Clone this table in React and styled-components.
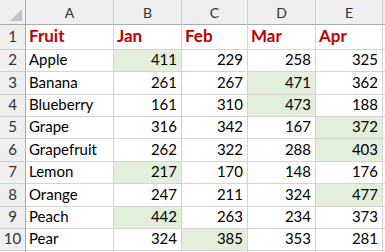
import React from "react";
import styled, { createGlobalStyle } from "styled-components";

const Global = createGlobalStyle`
  html, body { margin: 0; padding: 0; background: #fff; }
  body { font-family: Lato, "Liberation Sans", sans-serif; }
`;

const Sheet = styled.div`
  display: grid;
  grid-template-columns: 26px 88px 68px 66px 68px 67px 2px;
  grid-template-rows: ${(p) => p.$rows};
  width: 385px;
  height: 252px;
  overflow: hidden;
`;

const Corner = styled.div`
  background: #efefef;
  border-right: 1px solid #ababab;
  border-bottom: 1px solid #ababab;
  position: relative;
  &::after {
    content: "";
    position: absolute;
    right: 3px;
    bottom: 3px;
    width: 0;
    height: 0;
    border-left: 12px solid transparent;
    border-bottom: 12px solid #c4c4c4;
  }
`;

const ColHead = styled.div`
  background: #efefef;
  border-right: 1px solid #cfcfcf;
  border-bottom: 1px solid #ababab;
  display: flex;
  align-items: center;
  justify-content: center;
  font-size: 14px;
  color: #333;
  padding-top: 1px;
`;

const RowHead = styled.div`
  background: #efefef;
  border-right: 1px solid #ababab;
  border-bottom: 1px solid #cfcfcf;
  display: flex;
  align-items: flex-end;
  justify-content: center;
  font-size: 15px;
  color: #333;
  padding-bottom: ${(p) => (p.$big ? "4px" : "3px")};
  box-sizing: border-box;
`;

const Cell = styled.div`
  border-right: 1px solid #d4d4d4;
  border-bottom: 1px solid #d4d4d4;
  background: ${(p) => (p.$hi ? "#e2efda" : "#fff")};
  display: flex;
  align-items: flex-end;
  justify-content: ${(p) => (p.$num ? "flex-end" : "flex-start")};
  padding: 0 4px 3px 3px;
  box-sizing: border-box;
  font-size: 15px;
  color: #000;
  white-space: nowrap;
  overflow: hidden;
`;

const HeadCell = styled(Cell)`
  font-size: 17px;
  font-weight: bold;
  color: #c00000;
  padding-bottom: 3px;
`;

const Filler = styled.div`
  background: ${(p) => (p.$head ? "#efefef" : "#fff")};
  border-bottom: 1px solid ${(p) => (p.$head ? "#ababab" : "#d4d4d4")};
`;

const cols = ["A", "B", "C", "D", "E"];
const headers = ["Fruit", "Jan", "Feb", "Mar", "Apr"];
const data = [
  ["Apple", 411, 229, 258, 325],
  ["Banana", 261, 267, 471, 362],
  ["Blueberry", 161, 310, 473, 188],
  ["Grape", 316, 342, 167, 372],
  ["Grapefruit", 262, 322, 288, 403],
  ["Lemon", 217, 170, 148, 176],
  ["Orange", 247, 211, 324, 477],
  ["Peach", 442, 263, 234, 373],
  ["Pear", 324, 385, 353, 281],
];

const maxes = [1, 2, 3, 4].map((c) => null);
const highlight = data.map((row) => {
  const nums = row.slice(1);
  const m = Math.max(...nums);
  return nums.map((v) => v === m);
});

const rowHeights = ["25px", "25px", "22px", "23px", "22px", "22px", "23px", "22px", "23px", "22px", "22px", "1fr"];

export default function App() {
  return (
    <>
      <Global />
      <Sheet $rows={rowHeights.join(" ")}>
        <Corner />
        {cols.map((c) => (
          <ColHead key={c}>{c}</ColHead>
        ))}
        <Filler $head />

        <RowHead $big>1</RowHead>
        {headers.map((h) => (
          <HeadCell key={h}>{h}</HeadCell>
        ))}
        <Filler />

        {data.map((row, i) => (
          <React.Fragment key={row[0]}>
            <RowHead>{i + 2}</RowHead>
            <Cell>{row[0]}</Cell>
            {row.slice(1).map((v, j) => (
              <Cell key={j} $num $hi={highlight[i][j]}>
                {v}
              </Cell>
            ))}
            <Filler />
          </React.Fragment>
        ))}

        <RowHead />
        <Cell />
        <Cell />
        <Cell />
        <Cell />
        <Cell />
        <Filler />
      </Sheet>
    </>
  );
}
